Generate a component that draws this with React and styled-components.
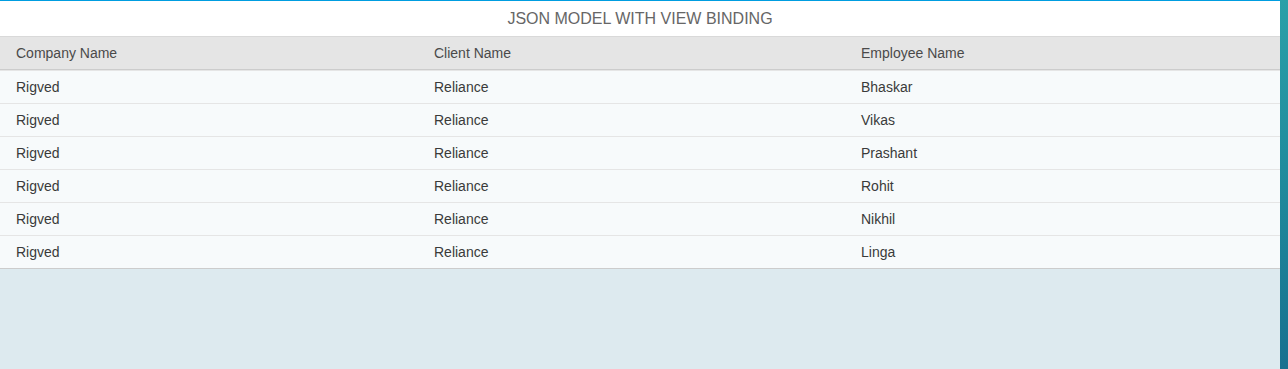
import React from 'react'
import styled, { createGlobalStyle } from 'styled-components'

const GlobalStyle = createGlobalStyle`
  html, body {
    margin: 0;
    padding: 0;
    height: 100%;
  }
  body {
    font-family: "Liberation Sans", Arial, sans-serif;
    font-size: 14px;
    color: #3a3a3a;
  }
`

const Page = styled.div`
  display: flex;
  height: 369px;
  overflow: hidden;
`

const Main = styled.div`
  flex: 1;
  display: flex;
  flex-direction: column;
  background: #ddeaef;
`

const Strip = styled.div`
  width: 8px;
  background: linear-gradient(180deg, #2aa0a8 0%, #1f8a9c 50%, #17708f 100%);
`

const TitleBar = styled.div`
  height: 35px;
  border-top: 1px solid #009de0;
  background: #fff;
  display: flex;
  align-items: center;
  justify-content: center;
  font-size: 16px;
  color: #666;
`

const Table = styled.div`
  display: flex;
  flex-direction: column;
  border-bottom: 1px solid #cccccc;
`

const Row = styled.div`
  display: grid;
  grid-template-columns: 418px 427px 1fr;
  height: 32px;
  align-items: center;
  background: ${p => (p.$head ? '#e5e5e5' : '#f7fafb')};
  border-top: 1px solid ${p => (p.$head ? '#d9d9d9' : '#e5e5e5')};
  ${p => p.$head && 'border-bottom: 1px solid #cccccc;'}
  color: ${p => (p.$head ? '#4a4a4a' : '#3a3a3a')};
  & + & {
    border-top: ${p => (p.$afterHead ? 'none' : '1px solid #e5e5e5')};
  }
`

const Cell = styled.div`
  padding: 0 16px;
  white-space: nowrap;
`

const employees = ['Bhaskar', 'Vikas', 'Prashant', 'Rohit', 'Nikhil', 'Linga']

export default function App() {
  return (
    <Page>
      <GlobalStyle />
      <Main>
        <TitleBar>JSON MODEL WITH VIEW BINDING</TitleBar>
        <Table>
          <Row $head>
            <Cell>Company Name</Cell>
            <Cell>Client Name</Cell>
            <Cell>Employee Name</Cell>
          </Row>
          {employees.map((name, i) => (
            <Row key={name} $afterHead={i === 0}>
              <Cell>Rigved</Cell>
              <Cell>Reliance</Cell>
              <Cell>{name}</Cell>
            </Row>
          ))}
        </Table>
      </Main>
      <Strip />
    </Page>
  )
}
